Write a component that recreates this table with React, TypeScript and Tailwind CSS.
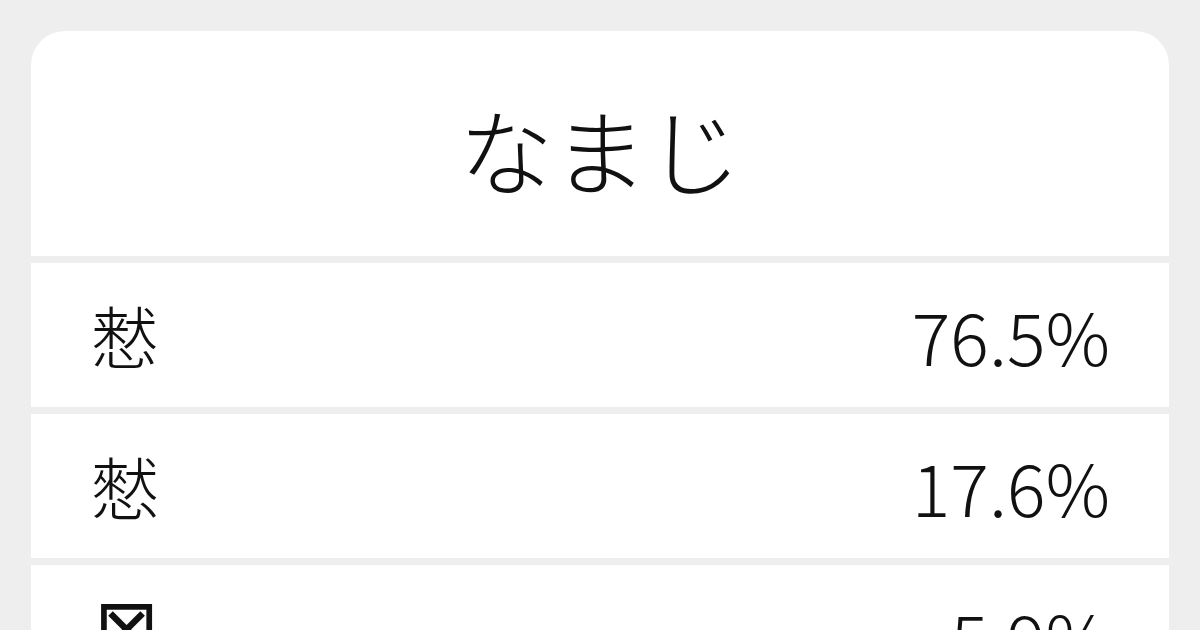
const rows = [
  { kanji: '慭', pct: '76.5%' },
  { kanji: '憖', pct: '17.6%' },
  { kanji: '⊠', pct: '5.9%', box: true },
];

export default function App() {
  return (
    <div
      className="w-[1200px] h-[630px] overflow-hidden bg-[#eeeeee] pt-[31px] px-[31px] text-[#111111] font-light"
      style={{ fontFamily: '"Noto Sans CJK JP", "Noto Sans", sans-serif' }}
    >
      <div className="flex flex-col gap-[7px] rounded-t-[34px] overflow-hidden">
        <div className="h-[225px] bg-white flex items-center justify-center pt-[8px]">
          <h1 className="text-[94px] leading-none font-light">なまじ</h1>
        </div>
        {rows.map((row) => (
          <div
            key={row.pct}
            className="h-[144px] shrink-0 bg-white flex items-center justify-between pl-[60px] pr-[59px]"
          >
            {row.box ? (
              <span className="text-[78px] leading-none font-['DejaVu_Sans',sans-serif] font-normal pl-[3px] mb-[20px]">
                {row.kanji}
              </span>
            ) : (
              <span className="text-[68px] leading-none">{row.kanji}</span>
            )}
            <span className="text-[72px] leading-none">{row.pct}</span>
          </div>
        ))}
      </div>
    </div>
  );
}
